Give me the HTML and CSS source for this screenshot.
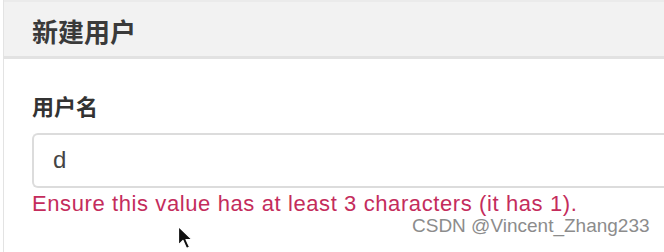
FILE: index.html
```html
<!DOCTYPE html>
<html lang="zh">
<head>
<meta charset="utf-8">
<title>新建用户</title>
<link rel="stylesheet" href="styles.css">
</head>
<body>
<div class="panel">
  <div class="panel-heading">新建用户</div>
  <div class="panel-body">
    <label class="field-label">用户名</label>
    <div class="input">d</div>
    <div class="error">Ensure this value has at least 3 characters (it has 1).</div>
  </div>
</div>
<svg class="cursor" width="18" height="26" viewBox="0 0 18 26">
  <path d="M1.5 1.5 L1.5 20 L6 15.5 L9.5 23.5 L12.5 22 L9 14.5 L15 14.5 Z" fill="#111" stroke="#fff" stroke-width="1.2" stroke-linejoin="round"/>
</svg>
<div class="watermark">CSDN @Vincent_Zhang233</div>
</body>
</html>
```

FILE: styles.css
```css
html, body {
  margin: 0;
  padding: 0;
  background: #fff;
  width: 664px;
  height: 252px;
  overflow: hidden;
  position: relative;
}
.panel {
  margin-left: 3px;
  border-left: 1px solid #e3e3e3;
  height: 252px;
  font-family: "Noto Sans CJK SC", "Liberation Sans", sans-serif;
}
.panel-heading {
  height: 59px;
  box-sizing: border-box;
  padding-left: 28px;
  padding-top: 13px;
  background: #f2f2f2;
  border-top: 2px solid #ebebeb;
  border-bottom: 3px solid #e2e2e2;
  font-size: 26px;
  line-height: 32px;
  color: #3a3a3a;
  font-weight: 700;
}
.panel-body {
  padding: 31px 0 0 28px;
  display: flex;
  flex-direction: column;
}
.field-label {
  font-size: 22px;
  line-height: 30px;
  color: #333;
  font-weight: 700;
  margin-bottom: 13px;
}
.input {
  height: 55px;
  box-sizing: border-box;
  border: 2px solid #dcdcdc;
  border-right: none;
  border-radius: 6px 0 0 6px;
  padding-left: 19px;
  font-family: "Liberation Sans", sans-serif;
  font-size: 24px;
  line-height: 49px;
  color: #444;
}
.error {
  margin-top: 5px;
  font-family: "Liberation Sans", sans-serif;
  font-size: 22px;
  line-height: 22px;
  letter-spacing: 0.6px;
  color: #c42c5c;
  white-space: nowrap;
}
.cursor {
  position: absolute;
  left: 177px;
  top: 225px;
}
.watermark {
  position: absolute;
  left: 412px;
  top: 215px;
  font-family: "Liberation Sans", sans-serif;
  font-size: 19px;
  color: #8c8c8c;
  white-space: nowrap;
}
```
